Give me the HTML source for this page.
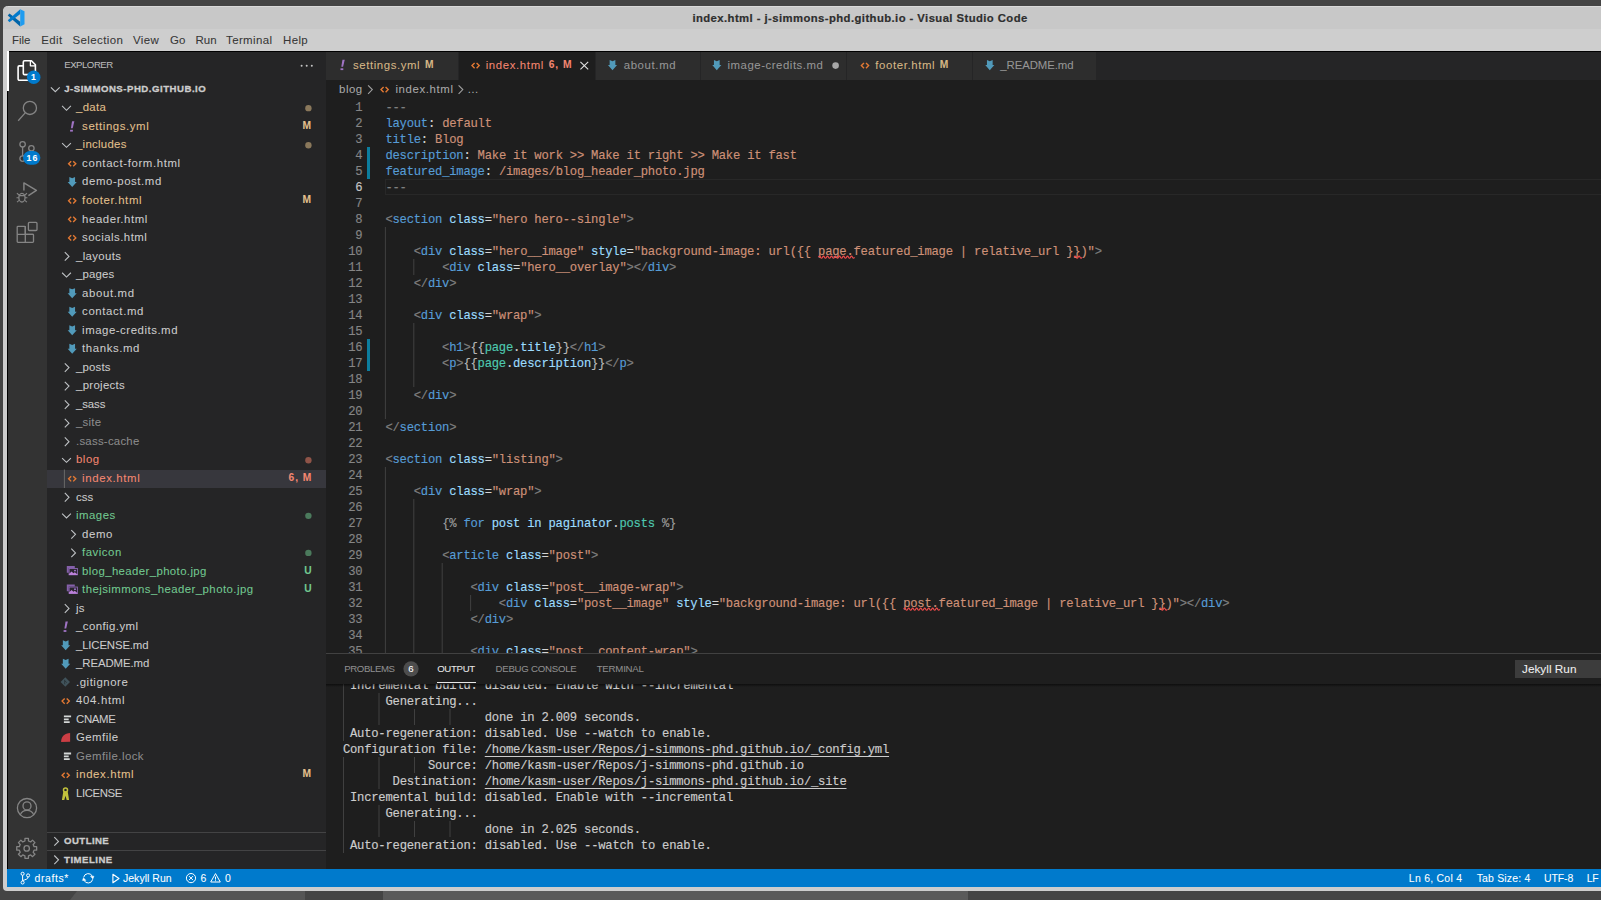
<!DOCTYPE html>
<html><head><meta charset="utf-8"><title>index.html - j-simmons-phd.github.io - Visual Studio Code</title>
<style>
html,body{margin:0;padding:0;}
body{width:1601px;height:900px;overflow:hidden;position:relative;background:#444;font-family:'Liberation Sans', sans-serif;}
body>div,body>span,body>svg{position:absolute;}
.t{white-space:pre;-webkit-text-stroke:0.06px;}
.m{font-family:'Liberation Mono', monospace;-webkit-text-stroke:0.15px;}
.t b{font-weight:400;}
</style></head>
<body>
<div style="left:3.00px;top:6.00px;width:1620.00px;height:885.00px;background:#cdcdcd;border-radius:5px 0 0 4px;"></div>
<div style="left:3.00px;top:6.00px;width:1620.00px;height:23.00px;background:#c8c8c8;border-radius:5px 0 0 0;"></div>
<div style="left:3.00px;top:29.00px;width:1620.00px;height:22.00px;background:#cecece;"></div>
<div style="left:8.00px;top:6.00px;width:1620.00px;height:1.00px;background:#d9d9d9;"></div>
<span class="t" id="t1" style="top:10.40px;line-height:16px;font-size:11.30px;color:#2e2e2e;left:692.40px;font-weight:700;letter-spacing:0.425px;-webkit-text-stroke:0.2px;">index.html - j-simmons-phd.github.io - Visual Studio Code</span>
<span class="t" id="t2" style="top:31.80px;line-height:16px;font-size:11.47px;color:#363636;left:12.00px;letter-spacing:-0.016px;">File</span>
<span class="t" id="t3" style="top:31.80px;line-height:16px;font-size:11.47px;color:#363636;left:41.30px;letter-spacing:0.387px;">Edit</span>
<span class="t" id="t4" style="top:31.80px;line-height:16px;font-size:11.47px;color:#363636;left:72.50px;letter-spacing:0.391px;">Selection</span>
<span class="t" id="t5" style="top:31.80px;line-height:16px;font-size:11.47px;color:#363636;left:133.00px;letter-spacing:0.363px;">View</span>
<span class="t" id="t6" style="top:31.80px;line-height:16px;font-size:11.47px;color:#363636;left:170.00px;letter-spacing:-0.023px;">Go</span>
<span class="t" id="t7" style="top:31.80px;line-height:16px;font-size:11.47px;color:#363636;left:195.50px;letter-spacing:0.016px;">Run</span>
<span class="t" id="t8" style="top:31.80px;line-height:16px;font-size:11.47px;color:#363636;left:226.00px;letter-spacing:0.395px;">Terminal</span>
<span class="t" id="t9" style="top:31.80px;line-height:16px;font-size:11.47px;color:#363636;left:283.00px;letter-spacing:0.371px;">Help</span>
<svg width="1601" height="900" viewBox="0 0 1601 900" style="left:0;top:0"><g transform="translate(7.4,9.3) scale(0.171)">
<polygon points="12,25 75,73 75,100 2,36" fill="#0065a9"/>
<polygon points="2,64 12,75 75,27 75,0" fill="#007acc"/>
<polygon points="75,0 100,12 100,88 75,100" fill="#1f9cf0"/>
</g></svg>
<div style="left:7.00px;top:51.00px;width:1600.00px;height:818.00px;background:#000;"></div>
<div style="left:8.00px;top:52.00px;width:39.00px;height:817.00px;background:#333333;"></div>
<div style="left:47.00px;top:52.00px;width:279.00px;height:817.00px;background:#252526;"></div>
<div style="left:326.00px;top:52.00px;width:1280.00px;height:817.00px;background:#1e1e1e;"></div>
<div style="left:326.00px;top:52.00px;width:1280.00px;height:28.00px;background:#252526;"></div>
<div style="left:7.00px;top:51.00px;width:2.20px;height:39.80px;background:#fff;"></div>
<svg width="1601" height="900" viewBox="0 0 1601 900" style="left:0;top:0">
<g fill="none" stroke="#fff" stroke-width="1.6" stroke-linejoin="round">
<path d="M23.3,73.4 V61.9 a1.2,1.2 0 0 1 1.2,-1.2 H31.4 L35.4,64.8 V73.4 a1.2,1.2 0 0 1 -1.2,1.2 H24.5 a1.2,1.2 0 0 1 -1.2,-1.2 Z"/>
<path d="M30.4,60.9 V65.8 H35.2" stroke-width="1.3"/>
<path d="M23.3,65.9 H19.3 a1.2,1.2 0 0 0 -1.2,1.2 V79.1 a1.2,1.2 0 0 0 1.2,1.2 H28.4 a1.2,1.2 0 0 0 1.2,-1.2 V74.6"/>
</g>
<circle cx="33.7" cy="77.3" r="6.8" fill="#007acc"/>
<g fill="none" stroke="#858585" stroke-width="1.3">
<circle cx="29.9" cy="107.9" r="6.6"/><path d="M25.2,112.9 L18.2,120.7"/>
<circle cx="22.6" cy="144.3" r="2.7"/><circle cx="31.4" cy="148.3" r="2.7"/><circle cx="22.6" cy="158.6" r="2.7"/>
<path d="M22.6,147 V155.9 M31.4,151 C31.4,155 27,155.5 22.6,155.9"/>
<path d="M23.9,190.6 V182.9 L36.4,190.3 L28.4,195.6" stroke-linejoin="round" stroke-width="1.45"/>
<ellipse cx="21.95" cy="197.7" rx="3.1" ry="4.3"/>
<path d="M19.1,195.6 H24.8 M18.9,195 L16.9,193.1 M25,195 L27,193.1 M18.8,197.7 H16.5 M25.1,197.7 H27.4 M19.1,200.4 L17,202.1 M24.8,200.4 L26.9,202.1" stroke-width="1.1"/>
<path d="M17.2,234.3 H33.5 M25.3,226.3 V242.3" />
<path d="M25.3,234.3 V227.1 a0.8,0.8 0 0 0 -0.8,-0.8 H18 a0.8,0.8 0 0 0 -0.8,0.8 V241.5 a0.8,0.8 0 0 0 0.8,0.8 H32.7 a0.8,0.8 0 0 0 0.8,-0.8 V235.1 a0.8,0.8 0 0 0 -0.8,-0.8 Z"/>
<rect x="28.4" y="222.4" width="8.6" height="8.1" rx="1"/>
<circle cx="27" cy="808.1" r="9.6"/><circle cx="27" cy="805.9" r="4"/>
<path d="M20.3,814.9 C21.5,811.6 24,810.4 27,810.4 C30,810.4 32.5,811.6 33.7,814.9"/>
<path d="M24.96,838.45 L28.44,838.45 L28.47,841.01 L30.67,841.92 L32.51,840.14 L34.96,842.59 L33.18,844.43 L34.09,846.63 L36.65,846.66 L36.65,850.14 L34.09,850.17 L33.18,852.37 L34.96,854.21 L32.51,856.66 L30.67,854.88 L28.47,855.79 L28.44,858.35 L24.96,858.35 L24.93,855.79 L22.73,854.88 L20.89,856.66 L18.44,854.21 L20.22,852.37 L19.31,850.17 L16.75,850.14 L16.75,846.66 L19.31,846.63 L20.22,844.43 L18.44,842.59 L20.89,840.14 L22.73,841.92 L24.93,841.01Z" stroke-linejoin="round"/><circle cx="26.7" cy="848.4" r="2.7"/>
</g>
<rect x="23" y="150.9" width="17.4" height="13.9" rx="6.95" fill="#007acc"/>
</svg>
<span class="t" id="t10" style="top:72.00px;line-height:10px;font-size:8.76px;color:#fff;left:31.00px;font-weight:700;letter-spacing:0.953px;">1</span>
<span class="t" id="t11" style="top:152.60px;line-height:10px;font-size:8.76px;color:#fff;left:26.60px;font-weight:700;letter-spacing:0.961px;">16</span>
<span class="t" id="t12" style="top:56.70px;line-height:16px;font-size:9.65px;color:#bbbbbb;left:64.20px;letter-spacing:-0.482px;">EXPLORER</span>
<svg width="1601" height="900" viewBox="0 0 1601 900" style="left:0;top:0"><g fill="#c5c5c5"><circle cx="301.6" cy="65.8" r="1"/><circle cx="306.7" cy="65.8" r="1"/><circle cx="311.8" cy="65.8" r="1"/></g></svg>
<span class="t" id="t13" style="top:80.60px;line-height:16px;font-size:9.65px;color:#cccccc;left:64.20px;font-weight:700;letter-spacing:0.505px;-webkit-text-stroke:0.3px;">J-SIMMONS-PHD.GITHUB.IO</span>
<span class="t" id="t14" style="top:99.36px;line-height:16px;font-size:11.40px;color:#e2c08d;left:76.00px;letter-spacing:0.309px;">_data</span>
<span class="t" id="t15" style="top:117.89px;line-height:16px;font-size:11.40px;color:#e2c08d;left:82.10px;letter-spacing:0.586px;">settings.yml</span>
<span class="t" id="t16" style="top:117.89px;line-height:16px;font-size:10.26px;color:#e2c08d;right:1288.70px;font-weight:700;letter-spacing:1.234px;">M</span>
<span class="t" id="t17" style="top:136.43px;line-height:16px;font-size:11.40px;color:#e2c08d;left:76.00px;letter-spacing:0.288px;">_includes</span>
<span class="t" id="t18" style="top:154.95px;line-height:16px;font-size:11.40px;color:#cccccc;left:82.10px;letter-spacing:0.627px;">contact-form.html</span>
<span class="t" id="t19" style="top:173.49px;line-height:16px;font-size:11.40px;color:#cccccc;left:82.10px;letter-spacing:0.578px;">demo-post.md</span>
<span class="t" id="t20" style="top:192.01px;line-height:16px;font-size:11.40px;color:#e2c08d;left:82.10px;letter-spacing:0.625px;">footer.html</span>
<span class="t" id="t21" style="top:192.01px;line-height:16px;font-size:10.26px;color:#e2c08d;right:1288.70px;font-weight:700;letter-spacing:1.234px;">M</span>
<span class="t" id="t22" style="top:210.55px;line-height:16px;font-size:11.40px;color:#cccccc;left:82.10px;letter-spacing:0.572px;">header.html</span>
<span class="t" id="t23" style="top:229.07px;line-height:16px;font-size:11.40px;color:#cccccc;left:82.10px;letter-spacing:0.473px;">socials.html</span>
<span class="t" id="t24" style="top:247.61px;line-height:16px;font-size:11.40px;color:#cccccc;left:76.00px;letter-spacing:0.350px;">_layouts</span>
<span class="t" id="t25" style="top:266.14px;line-height:16px;font-size:11.40px;color:#cccccc;left:76.00px;letter-spacing:0.177px;">_pages</span>
<span class="t" id="t26" style="top:284.67px;line-height:16px;font-size:11.40px;color:#cccccc;left:82.10px;letter-spacing:0.633px;">about.md</span>
<span class="t" id="t27" style="top:303.20px;line-height:16px;font-size:11.40px;color:#cccccc;left:82.10px;letter-spacing:0.620px;">contact.md</span>
<span class="t" id="t28" style="top:321.73px;line-height:16px;font-size:11.40px;color:#cccccc;left:82.10px;letter-spacing:0.535px;">image-credits.md</span>
<span class="t" id="t29" style="top:340.26px;line-height:16px;font-size:11.40px;color:#cccccc;left:82.10px;letter-spacing:0.592px;">thanks.md</span>
<span class="t" id="t30" style="top:358.79px;line-height:16px;font-size:11.40px;color:#cccccc;left:76.00px;letter-spacing:0.198px;">_posts</span>
<span class="t" id="t31" style="top:377.32px;line-height:16px;font-size:11.40px;color:#cccccc;left:76.00px;letter-spacing:0.314px;">_projects</span>
<span class="t" id="t32" style="top:395.85px;line-height:16px;font-size:11.40px;color:#cccccc;left:76.00px;letter-spacing:-0.106px;">_sass</span>
<span class="t" id="t33" style="top:414.38px;line-height:16px;font-size:11.40px;color:#8c8c8c;left:76.00px;letter-spacing:0.228px;">_site</span>
<span class="t" id="t34" style="top:432.91px;line-height:16px;font-size:11.40px;color:#8c8c8c;left:76.00px;letter-spacing:0.250px;">.sass-cache</span>
<span class="t" id="t35" style="top:451.44px;line-height:16px;font-size:11.40px;color:#f48771;left:76.00px;letter-spacing:0.512px;">blog</span>
<div style="left:47.00px;top:469.50px;width:279.00px;height:18.53px;background:#37373d;"></div>
<span class="t" id="t36" style="top:469.97px;line-height:16px;font-size:11.40px;color:#f48771;left:82.10px;letter-spacing:0.631px;">index.html</span>
<span class="t" id="t37" style="top:469.97px;line-height:16px;font-size:10.26px;color:#f48771;right:1288.70px;font-weight:700;letter-spacing:0.961px;">6, M</span>
<span class="t" id="t38" style="top:488.50px;line-height:16px;font-size:11.40px;color:#cccccc;left:76.00px;letter-spacing:0.099px;">css</span>
<span class="t" id="t39" style="top:507.03px;line-height:16px;font-size:11.40px;color:#73c991;left:76.00px;letter-spacing:0.497px;">images</span>
<span class="t" id="t40" style="top:525.56px;line-height:16px;font-size:11.40px;color:#cccccc;left:82.10px;letter-spacing:0.621px;">demo</span>
<span class="t" id="t41" style="top:544.09px;line-height:16px;font-size:11.40px;color:#73c991;left:82.10px;letter-spacing:0.509px;">favicon</span>
<span class="t" id="t42" style="top:562.62px;line-height:16px;font-size:11.40px;color:#73c991;left:82.10px;letter-spacing:0.387px;">blog_header_photo.jpg</span>
<span class="t" id="t43" style="top:562.62px;line-height:16px;font-size:10.26px;color:#73c991;right:1288.70px;font-weight:700;letter-spacing:0.578px;">U</span>
<span class="t" id="t44" style="top:581.15px;line-height:16px;font-size:11.40px;color:#73c991;left:82.10px;letter-spacing:0.443px;">thejsimmons_header_photo.jpg</span>
<span class="t" id="t45" style="top:581.15px;line-height:16px;font-size:10.26px;color:#73c991;right:1288.70px;font-weight:700;letter-spacing:0.578px;">U</span>
<span class="t" id="t46" style="top:599.68px;line-height:16px;font-size:11.40px;color:#cccccc;left:76.00px;letter-spacing:0.250px;">js</span>
<span class="t" id="t47" style="top:618.21px;line-height:16px;font-size:11.40px;color:#cccccc;left:76.00px;letter-spacing:0.443px;">_config.yml</span>
<span class="t" id="t48" style="top:636.74px;line-height:16px;font-size:11.40px;color:#cccccc;left:76.00px;letter-spacing:-0.158px;">_LICENSE.md</span>
<span class="t" id="t49" style="top:655.27px;line-height:16px;font-size:11.40px;color:#cccccc;left:76.00px;letter-spacing:-0.086px;">_README.md</span>
<span class="t" id="t50" style="top:673.80px;line-height:16px;font-size:11.40px;color:#cccccc;left:76.00px;letter-spacing:0.541px;">.gitignore</span>
<span class="t" id="t51" style="top:692.33px;line-height:16px;font-size:11.40px;color:#cccccc;left:76.00px;letter-spacing:0.688px;">404.html</span>
<span class="t" id="t52" style="top:710.86px;line-height:16px;font-size:11.40px;color:#cccccc;left:76.00px;letter-spacing:-0.309px;">CNAME</span>
<span class="t" id="t53" style="top:729.38px;line-height:16px;font-size:11.40px;color:#cccccc;left:76.00px;letter-spacing:0.460px;">Gemfile</span>
<span class="t" id="t54" style="top:747.92px;line-height:16px;font-size:11.40px;color:#8c8c8c;left:76.00px;letter-spacing:0.443px;">Gemfile.lock</span>
<span class="t" id="t55" style="top:766.45px;line-height:16px;font-size:11.40px;color:#e2c08d;left:76.00px;letter-spacing:0.631px;">index.html</span>
<span class="t" id="t56" style="top:766.45px;line-height:16px;font-size:10.26px;color:#e2c08d;right:1288.70px;font-weight:700;letter-spacing:1.234px;">M</span>
<span class="t" id="t57" style="top:784.98px;line-height:16px;font-size:11.40px;color:#cccccc;left:76.00px;letter-spacing:-0.415px;">LICENSE</span>
<div style="left:47.00px;top:832.00px;width:279.00px;height:1.00px;background:#434344;"></div>
<div style="left:47.00px;top:850.40px;width:279.00px;height:1.00px;background:#434344;"></div>
<span class="t" id="t58" style="top:832.80px;line-height:16px;font-size:9.65px;color:#cccccc;left:64.10px;font-weight:700;letter-spacing:0.406px;-webkit-text-stroke:0.3px;">OUTLINE</span>
<span class="t" id="t59" style="top:851.70px;line-height:16px;font-size:9.65px;color:#cccccc;left:64.10px;font-weight:700;letter-spacing:0.469px;-webkit-text-stroke:0.3px;">TIMELINE</span>
<svg width="1601" height="900" viewBox="0 0 1601 900" style="left:0;top:0"><path d="M50.90,87.40 L55.30,91.70 L59.70,87.40" fill="none" stroke="#bfc2c5" stroke-width="1.1"/><path d="M62.10,105.97 L66.50,110.27 L70.90,105.97" fill="none" stroke="#bfc2c5" stroke-width="1.1"/><circle cx="308.4" cy="108.17" r="3.2" fill="#8a785b"/><polygon points="72.05,121.20 74.35,121.20 72.70,128.19 70.90,128.19" fill="#a074c4"/><rect x="70.10" y="129.80" width="2.8" height="1.8" fill="#a074c4"/><path d="M62.10,143.03 L66.50,147.33 L70.90,143.03" fill="none" stroke="#bfc2c5" stroke-width="1.1"/><circle cx="308.4" cy="145.23" r="3.2" fill="#8a785b"/><path d="M71.20,161.16 L68.60,163.75 L71.20,166.35 M73.20,161.16 L75.80,163.75 L73.20,166.35" fill="none" stroke="#e37933" stroke-width="1.4"/><polygon points="69.35,176.99 72.20,178.19 75.05,176.99 75.05,181.99 76.75,181.99 72.20,187.09 67.65,181.99 69.35,181.99" fill="#519aba"/><path d="M71.20,198.22 L68.60,200.81 L71.20,203.41 M73.20,198.22 L75.80,200.81 L73.20,203.41" fill="none" stroke="#e37933" stroke-width="1.4"/><path d="M71.20,216.75 L68.60,219.35 L71.20,221.95 M73.20,216.75 L75.80,219.35 L73.20,221.95" fill="none" stroke="#e37933" stroke-width="1.4"/><path d="M71.20,235.28 L68.60,237.88 L71.20,240.47 M73.20,235.28 L75.80,237.88 L73.20,240.47" fill="none" stroke="#e37933" stroke-width="1.4"/><path d="M64.80,252.11 L69.00,256.41 L64.80,260.71" fill="none" stroke="#bfc2c5" stroke-width="1.1"/><path d="M62.10,272.74 L66.50,277.04 L70.90,272.74" fill="none" stroke="#bfc2c5" stroke-width="1.1"/><polygon points="69.35,288.17 72.20,289.37 75.05,288.17 75.05,293.17 76.75,293.17 72.20,298.27 67.65,293.17 69.35,293.17" fill="#519aba"/><polygon points="69.35,306.69 72.20,307.89 75.05,306.69 75.05,311.69 76.75,311.69 72.20,316.80 67.65,311.69 69.35,311.69" fill="#519aba"/><polygon points="69.35,325.22 72.20,326.42 75.05,325.22 75.05,330.22 76.75,330.22 72.20,335.32 67.65,330.22 69.35,330.22" fill="#519aba"/><polygon points="69.35,343.75 72.20,344.95 75.05,343.75 75.05,348.75 76.75,348.75 72.20,353.86 67.65,348.75 69.35,348.75" fill="#519aba"/><path d="M64.80,363.29 L69.00,367.59 L64.80,371.89" fill="none" stroke="#bfc2c5" stroke-width="1.1"/><path d="M64.80,381.81 L69.00,386.12 L64.80,390.42" fill="none" stroke="#bfc2c5" stroke-width="1.1"/><path d="M64.80,400.34 L69.00,404.64 L64.80,408.94" fill="none" stroke="#bfc2c5" stroke-width="1.1"/><path d="M64.80,418.87 L69.00,423.17 L64.80,427.47" fill="none" stroke="#bfc2c5" stroke-width="1.1"/><path d="M64.80,437.41 L69.00,441.71 L64.80,446.01" fill="none" stroke="#bfc2c5" stroke-width="1.1"/><path d="M62.10,458.04 L66.50,462.34 L70.90,458.04" fill="none" stroke="#bfc2c5" stroke-width="1.1"/><circle cx="308.4" cy="460.24" r="3.2" fill="#8f5448"/><path d="M71.20,476.16 L68.60,478.76 L71.20,481.37 M73.20,476.16 L75.80,478.76 L73.20,481.37" fill="none" stroke="#e37933" stroke-width="1.4"/><path d="M64.80,492.99 L69.00,497.29 L64.80,501.59" fill="none" stroke="#bfc2c5" stroke-width="1.1"/><path d="M62.10,513.62 L66.50,517.92 L70.90,513.62" fill="none" stroke="#bfc2c5" stroke-width="1.1"/><circle cx="308.4" cy="515.83" r="3.2" fill="#4b7a5c"/><path d="M71.30,530.06 L75.50,534.36 L71.30,538.65" fill="none" stroke="#bfc2c5" stroke-width="1.1"/><path d="M71.30,548.59 L75.50,552.88 L71.30,557.18" fill="none" stroke="#bfc2c5" stroke-width="1.1"/><circle cx="308.4" cy="552.88" r="3.2" fill="#4b7a5c"/><path d="M67.75,572.71 V566.96 H74.80" fill="none" stroke="#8560aa" stroke-width="1.9"/><rect x="69.10" y="568.51" width="8.3" height="6.3" fill="#2a252e" stroke="#8c66b4" stroke-width="0.9"/><polygon points="68.90,575.12 68.90,574.01 71.60,571.51 73.40,573.31 74.80,572.31 77.60,574.62 77.60,575.12" fill="#bb80d8"/><circle cx="75.00" cy="570.62" r="0.95" fill="#a47ad0"/><path d="M67.75,591.25 V585.50 H74.80" fill="none" stroke="#8560aa" stroke-width="1.9"/><rect x="69.10" y="587.05" width="8.3" height="6.3" fill="#2a252e" stroke="#8c66b4" stroke-width="0.9"/><polygon points="68.90,593.65 68.90,592.55 71.60,590.05 73.40,591.85 74.80,590.85 77.60,593.15 77.60,593.65" fill="#bb80d8"/><circle cx="75.00" cy="589.15" r="0.95" fill="#a47ad0"/><path d="M64.80,604.18 L69.00,608.48 L64.80,612.77" fill="none" stroke="#bfc2c5" stroke-width="1.1"/><polygon points="65.55,621.50 67.85,621.50 66.20,628.50 64.40,628.50" fill="#a074c4"/><rect x="63.60" y="630.11" width="2.8" height="1.8" fill="#a074c4"/><polygon points="62.85,640.24 65.70,641.43 68.55,640.24 68.55,645.24 70.25,645.24 65.70,650.33 61.15,645.24 62.85,645.24" fill="#519aba"/><polygon points="62.85,658.77 65.70,659.97 68.55,658.77 68.55,663.77 70.25,663.77 65.70,668.87 61.15,663.77 62.85,663.77" fill="#519aba"/><polygon points="65.30,677.29 70.00,682.00 65.30,686.70 60.60,682.00" fill="#41535b"/><path d="M64.70,679.79 V684.20 M64.70,680.79 L66.80,682.60" stroke="#2a3439" stroke-width="0.9" fill="none"/><path d="M64.70,698.52 L62.10,701.12 L64.70,703.73 M66.70,698.52 L69.30,701.12 L66.70,703.73" fill="none" stroke="#e37933" stroke-width="1.4"/><path d="M63.90,716.46 H71.10 M63.90,719.36 H68.70 M63.90,722.06 H69.70" stroke="#d4d7d6" stroke-width="1.8" fill="none"/><path d="M61.10,742.08 C61.10,736.68 64.70,733.08 70.10,733.08 V741.68 Z" fill="#cc3e44"/><path d="M63.90,753.52 H71.10 M63.90,756.42 H68.70 M63.90,759.12 H69.70" stroke="#d4d7d6" stroke-width="1.8" fill="none"/><path d="M64.70,772.64 L62.10,775.25 L64.70,777.85 M66.70,772.64 L69.30,775.25 L66.70,777.85" fill="none" stroke="#e37933" stroke-width="1.4"/><circle cx="65.50" cy="790.07" r="2.0" fill="none" stroke="#c2c23c" stroke-width="1.5"/><polygon points="63.30,791.57 67.70,791.57 69.10,799.98 66.70,799.98 65.50,795.77 64.30,799.98 61.90,799.98" fill="#c2c23c"/><path d="M64.4,469.50 V488.03" stroke="#686868" stroke-width="1"/><path d="M54.30,837.10 L58.50,841.40 L54.30,845.70" fill="none" stroke="#bfc2c5" stroke-width="1.1"/><path d="M54.30,855.50 L58.50,859.80 L54.30,864.10" fill="none" stroke="#bfc2c5" stroke-width="1.1"/></svg>
<div style="left:326.00px;top:52.00px;width:131.50px;height:28.00px;background:#2d2d2d;"></div>
<div style="left:458.50px;top:52.00px;width:136.50px;height:28.00px;background:#1e1e1e;"></div>
<div style="left:596.00px;top:52.00px;width:103.50px;height:28.00px;background:#2d2d2d;"></div>
<div style="left:700.50px;top:52.00px;width:145.90px;height:28.00px;background:#2d2d2d;"></div>
<div style="left:847.40px;top:52.00px;width:124.90px;height:28.00px;background:#2d2d2d;"></div>
<div style="left:973.30px;top:52.00px;width:122.80px;height:28.00px;background:#2d2d2d;"></div>
<span class="t" id="t60" style="top:57.00px;line-height:16px;font-size:11.40px;color:#d6b786;left:353.00px;letter-spacing:0.586px;">settings.yml</span>
<span class="t" id="t61" style="top:57.00px;line-height:16px;font-size:10.26px;color:#d6b786;left:425.00px;font-weight:700;letter-spacing:1.234px;">M</span>
<span class="t" id="t62" style="top:57.00px;line-height:16px;font-size:11.40px;color:#f48771;left:485.70px;letter-spacing:0.631px;">index.html</span>
<span class="t" id="t63" style="top:57.00px;line-height:16px;font-size:10.26px;color:#f48771;left:548.70px;font-weight:700;letter-spacing:0.961px;">6, M</span>
<span class="t" id="t64" style="top:57.00px;line-height:16px;font-size:11.40px;color:#969696;left:623.70px;letter-spacing:0.633px;">about.md</span>
<span class="t" id="t65" style="top:57.00px;line-height:16px;font-size:11.40px;color:#969696;left:727.50px;letter-spacing:0.535px;">image-credits.md</span>
<span class="t" id="t66" style="top:57.00px;line-height:16px;font-size:11.40px;color:#d6b786;left:875.20px;letter-spacing:0.625px;">footer.html</span>
<span class="t" id="t67" style="top:57.00px;line-height:16px;font-size:10.26px;color:#d6b786;left:939.70px;font-weight:700;letter-spacing:1.234px;">M</span>
<span class="t" id="t68" style="top:57.00px;line-height:16px;font-size:11.40px;color:#969696;left:1000.30px;letter-spacing:-0.086px;">_README.md</span>
<span class="t" id="t69" style="top:80.80px;line-height:16px;font-size:11.40px;color:#a9a9a9;left:339.10px;letter-spacing:0.512px;">blog</span>
<span class="t" id="t70" style="top:80.80px;line-height:16px;font-size:11.40px;color:#a9a9a9;left:395.40px;letter-spacing:0.631px;">index.html</span>
<span class="t" id="t71" style="top:80.60px;line-height:16px;font-size:11.40px;color:#a9a9a9;left:467.30px;letter-spacing:-0.469px;">…</span>
<svg width="1601" height="900" viewBox="0 0 1601 900" style="left:0;top:0"><polygon points="342.45,59.70 344.75,59.70 343.10,66.70 341.30,66.70" fill="#a074c4"/><rect x="340.50" y="68.30" width="2.8" height="1.8" fill="#a074c4"/><path d="M474.60,63.00 L472.00,65.60 L474.60,68.20 M476.60,63.00 L479.20,65.60 L476.60,68.20" fill="none" stroke="#e37933" stroke-width="1.4"/><path d="M580.4,61.9 L588.2,69.3 M588.2,61.9 L580.4,69.3" stroke="#e0e0e0" stroke-width="1.15" fill="none"/><polygon points="609.65,60.10 612.50,61.30 615.35,60.10 615.35,65.10 617.05,65.10 612.50,70.20 607.95,65.10 609.65,65.10" fill="#519aba"/><polygon points="713.95,60.10 716.80,61.30 719.65,60.10 719.65,65.10 721.35,65.10 716.80,70.20 712.25,65.10 713.95,65.10" fill="#519aba"/><circle cx="835.6" cy="65.6" r="3.3" fill="#a8a8a8"/><path d="M864.00,63.00 L861.40,65.60 L864.00,68.20 M866.00,63.00 L868.60,65.60 L866.00,68.20" fill="none" stroke="#e37933" stroke-width="1.4"/><polygon points="986.95,60.10 989.80,61.30 992.65,60.10 992.65,65.10 994.35,65.10 989.80,70.20 985.25,65.10 986.95,65.10" fill="#519aba"/><path d="M368.10,85.30 L372.30,89.60 L368.10,93.90" fill="none" stroke="#a0a0a0" stroke-width="1.1"/><path d="M383.60,87.00 L381.00,89.60 L383.60,92.20 M385.60,87.00 L388.20,89.60 L385.60,92.20" fill="none" stroke="#e37933" stroke-width="1.4"/><path d="M458.60,85.30 L462.80,89.60 L458.60,93.90" fill="none" stroke="#a0a0a0" stroke-width="1.1"/></svg>
<div style="left:385.00px;top:179.00px;width:1230.00px;height:16.00px;background:transparent;box-sizing:border-box;border:1px solid #282828;"></div>
<div style="left:367.00px;top:147.00px;width:3.00px;height:32.00px;background:#0c7d9d;"></div>
<div style="left:367.00px;top:339.00px;width:3.00px;height:32.00px;background:#0c7d9d;"></div>
<span class="t m" id="t72" style="top:100.00px;line-height:16px;font-size:12.20px;color:#858585;right:1238.60px;letter-spacing:-0.234px;">1</span>
<span class="t m" id="t73" style="left:385.40px;top:100.00px;line-height:16px;font-size:12.20px;color:#d4d4d4;letter-spacing:-0.224px;"><b style="color:#808080">---</b></span>
<span class="t m" id="t74" style="top:116.00px;line-height:16px;font-size:12.20px;color:#858585;right:1238.60px;letter-spacing:-0.234px;">2</span>
<span class="t m" id="t75" style="left:385.40px;top:116.00px;line-height:16px;font-size:12.20px;color:#d4d4d4;letter-spacing:-0.222px;"><b style="color:#569cd6">layout</b>: <b style="color:#ce9178">default</b></span>
<span class="t m" id="t76" style="top:132.00px;line-height:16px;font-size:12.20px;color:#858585;right:1238.60px;letter-spacing:-0.234px;">3</span>
<span class="t m" id="t77" style="left:385.40px;top:132.00px;line-height:16px;font-size:12.20px;color:#d4d4d4;letter-spacing:-0.223px;"><b style="color:#569cd6">title</b>: <b style="color:#ce9178">Blog</b></span>
<span class="t m" id="t78" style="top:148.00px;line-height:16px;font-size:12.20px;color:#858585;right:1238.60px;letter-spacing:-0.234px;">4</span>
<span class="t m" id="t79" style="left:385.40px;top:148.00px;line-height:16px;font-size:12.20px;color:#d4d4d4;letter-spacing:-0.221px;"><b style="color:#569cd6">description</b>: <b style="color:#ce9178">Make it work &gt;&gt; Make it right &gt;&gt; Make it fast</b></span>
<span class="t m" id="t80" style="top:164.00px;line-height:16px;font-size:12.20px;color:#858585;right:1238.60px;letter-spacing:-0.234px;">5</span>
<span class="t m" id="t81" style="left:385.40px;top:164.00px;line-height:16px;font-size:12.20px;color:#d4d4d4;letter-spacing:-0.221px;"><b style="color:#569cd6">featured_image</b>: <b style="color:#ce9178">/images/blog_header_photo.jpg</b></span>
<span class="t m" id="t82" style="top:180.00px;line-height:16px;font-size:12.20px;color:#c6c6c6;right:1238.60px;letter-spacing:-0.234px;">6</span>
<span class="t m" id="t83" style="left:385.40px;top:180.00px;line-height:16px;font-size:12.20px;color:#d4d4d4;letter-spacing:-0.224px;"><b style="color:#808080">---</b></span>
<span class="t m" id="t84" style="top:196.00px;line-height:16px;font-size:12.20px;color:#858585;right:1238.60px;letter-spacing:-0.234px;">7</span>
<span class="t m" id="t85" style="top:212.00px;line-height:16px;font-size:12.20px;color:#858585;right:1238.60px;letter-spacing:-0.234px;">8</span>
<span class="t m" id="t86" style="left:385.40px;top:212.00px;line-height:16px;font-size:12.20px;color:#d4d4d4;letter-spacing:-0.223px;"><b style="color:#808080">&lt;</b><b style="color:#569cd6">section</b> <b style="color:#9cdcfe">class</b>=<b style="color:#ce9178">"hero hero--single"</b><b style="color:#808080">&gt;</b></span>
<span class="t m" id="t87" style="top:228.00px;line-height:16px;font-size:12.20px;color:#858585;right:1238.60px;letter-spacing:-0.234px;">9</span>
<span class="t m" id="t88" style="top:244.00px;line-height:16px;font-size:12.20px;color:#858585;right:1238.60px;letter-spacing:-0.227px;">10</span>
<span class="t m" id="t89" style="left:385.40px;top:244.00px;line-height:16px;font-size:12.20px;color:#d4d4d4;letter-spacing:-0.222px;">    <b style="color:#808080">&lt;</b><b style="color:#569cd6">div</b> <b style="color:#9cdcfe">class</b>=<b style="color:#ce9178">"hero__image"</b> <b style="color:#9cdcfe">style</b>=<b style="color:#ce9178">"background-image: url({{ page.featured_image | relative_url }})"</b><b style="color:#808080">&gt;</b></span>
<span class="t m" id="t90" style="top:260.00px;line-height:16px;font-size:12.20px;color:#858585;right:1238.60px;letter-spacing:-0.227px;">11</span>
<span class="t m" id="t91" style="left:385.40px;top:260.00px;line-height:16px;font-size:12.20px;color:#d4d4d4;letter-spacing:-0.223px;">        <b style="color:#808080">&lt;</b><b style="color:#569cd6">div</b> <b style="color:#9cdcfe">class</b>=<b style="color:#ce9178">"hero__overlay"</b><b style="color:#808080">&gt;</b><b style="color:#808080">&lt;/</b><b style="color:#569cd6">div</b><b style="color:#808080">&gt;</b></span>
<span class="t m" id="t92" style="top:276.00px;line-height:16px;font-size:12.20px;color:#858585;right:1238.60px;letter-spacing:-0.227px;">12</span>
<span class="t m" id="t93" style="left:385.40px;top:276.00px;line-height:16px;font-size:12.20px;color:#d4d4d4;letter-spacing:-0.225px;">    <b style="color:#808080">&lt;/</b><b style="color:#569cd6">div</b><b style="color:#808080">&gt;</b></span>
<span class="t m" id="t94" style="top:292.00px;line-height:16px;font-size:12.20px;color:#858585;right:1238.60px;letter-spacing:-0.227px;">13</span>
<span class="t m" id="t95" style="top:308.00px;line-height:16px;font-size:12.20px;color:#858585;right:1238.60px;letter-spacing:-0.227px;">14</span>
<span class="t m" id="t96" style="left:385.40px;top:308.00px;line-height:16px;font-size:12.20px;color:#d4d4d4;letter-spacing:-0.224px;">    <b style="color:#808080">&lt;</b><b style="color:#569cd6">div</b> <b style="color:#9cdcfe">class</b>=<b style="color:#ce9178">"wrap"</b><b style="color:#808080">&gt;</b></span>
<span class="t m" id="t97" style="top:324.00px;line-height:16px;font-size:12.20px;color:#858585;right:1238.60px;letter-spacing:-0.227px;">15</span>
<span class="t m" id="t98" style="top:340.00px;line-height:16px;font-size:12.20px;color:#858585;right:1238.60px;letter-spacing:-0.227px;">16</span>
<span class="t m" id="t99" style="left:385.40px;top:340.00px;line-height:16px;font-size:12.20px;color:#d4d4d4;letter-spacing:-0.225px;">        <b style="color:#808080">&lt;</b><b style="color:#569cd6">h1</b><b style="color:#808080">&gt;</b><b style="color:#b8b8b8">{{</b><b style="color:#4ec9b0">page</b>.<b style="color:#9cdcfe">title</b><b style="color:#b8b8b8">}}</b><b style="color:#808080">&lt;/</b><b style="color:#569cd6">h1</b><b style="color:#808080">&gt;</b></span>
<span class="t m" id="t100" style="top:356.00px;line-height:16px;font-size:12.20px;color:#858585;right:1238.60px;letter-spacing:-0.227px;">17</span>
<span class="t m" id="t101" style="left:385.40px;top:356.00px;line-height:16px;font-size:12.20px;color:#d4d4d4;letter-spacing:-0.224px;">        <b style="color:#808080">&lt;</b><b style="color:#569cd6">p</b><b style="color:#808080">&gt;</b><b style="color:#b8b8b8">{{</b><b style="color:#4ec9b0">page</b>.<b style="color:#9cdcfe">description</b><b style="color:#b8b8b8">}}</b><b style="color:#808080">&lt;/</b><b style="color:#569cd6">p</b><b style="color:#808080">&gt;</b></span>
<span class="t m" id="t102" style="top:372.00px;line-height:16px;font-size:12.20px;color:#858585;right:1238.60px;letter-spacing:-0.227px;">18</span>
<span class="t m" id="t103" style="top:388.00px;line-height:16px;font-size:12.20px;color:#858585;right:1238.60px;letter-spacing:-0.227px;">19</span>
<span class="t m" id="t104" style="left:385.40px;top:388.00px;line-height:16px;font-size:12.20px;color:#d4d4d4;letter-spacing:-0.225px;">    <b style="color:#808080">&lt;/</b><b style="color:#569cd6">div</b><b style="color:#808080">&gt;</b></span>
<span class="t m" id="t105" style="top:404.00px;line-height:16px;font-size:12.20px;color:#858585;right:1238.60px;letter-spacing:-0.227px;">20</span>
<span class="t m" id="t106" style="top:420.00px;line-height:16px;font-size:12.20px;color:#858585;right:1238.60px;letter-spacing:-0.227px;">21</span>
<span class="t m" id="t107" style="left:385.40px;top:420.00px;line-height:16px;font-size:12.20px;color:#d4d4d4;letter-spacing:-0.223px;"><b style="color:#808080">&lt;/</b><b style="color:#569cd6">section</b><b style="color:#808080">&gt;</b></span>
<span class="t m" id="t108" style="top:436.00px;line-height:16px;font-size:12.20px;color:#858585;right:1238.60px;letter-spacing:-0.227px;">22</span>
<span class="t m" id="t109" style="top:452.00px;line-height:16px;font-size:12.20px;color:#858585;right:1238.60px;letter-spacing:-0.227px;">23</span>
<span class="t m" id="t110" style="left:385.40px;top:452.00px;line-height:16px;font-size:12.20px;color:#d4d4d4;letter-spacing:-0.223px;"><b style="color:#808080">&lt;</b><b style="color:#569cd6">section</b> <b style="color:#9cdcfe">class</b>=<b style="color:#ce9178">"listing"</b><b style="color:#808080">&gt;</b></span>
<span class="t m" id="t111" style="top:468.00px;line-height:16px;font-size:12.20px;color:#858585;right:1238.60px;letter-spacing:-0.227px;">24</span>
<span class="t m" id="t112" style="top:484.00px;line-height:16px;font-size:12.20px;color:#858585;right:1238.60px;letter-spacing:-0.227px;">25</span>
<span class="t m" id="t113" style="left:385.40px;top:484.00px;line-height:16px;font-size:12.20px;color:#d4d4d4;letter-spacing:-0.224px;">    <b style="color:#808080">&lt;</b><b style="color:#569cd6">div</b> <b style="color:#9cdcfe">class</b>=<b style="color:#ce9178">"wrap"</b><b style="color:#808080">&gt;</b></span>
<span class="t m" id="t114" style="top:500.00px;line-height:16px;font-size:12.20px;color:#858585;right:1238.60px;letter-spacing:-0.227px;">26</span>
<span class="t m" id="t115" style="top:516.00px;line-height:16px;font-size:12.20px;color:#858585;right:1238.60px;letter-spacing:-0.227px;">27</span>
<span class="t m" id="t116" style="left:385.40px;top:516.00px;line-height:16px;font-size:12.20px;color:#d4d4d4;letter-spacing:-0.223px;">        <b style="color:#9d9d9d">{%</b> <b style="color:#569cd6">for</b> <b style="color:#9cdcfe">post in paginator</b>.<b style="color:#4ec9b0">posts</b> <b style="color:#9d9d9d">%}</b></span>
<span class="t m" id="t117" style="top:532.00px;line-height:16px;font-size:12.20px;color:#858585;right:1238.60px;letter-spacing:-0.227px;">28</span>
<span class="t m" id="t118" style="top:548.00px;line-height:16px;font-size:12.20px;color:#858585;right:1238.60px;letter-spacing:-0.227px;">29</span>
<span class="t m" id="t119" style="left:385.40px;top:548.00px;line-height:16px;font-size:12.20px;color:#d4d4d4;letter-spacing:-0.223px;">        <b style="color:#808080">&lt;</b><b style="color:#569cd6">article</b> <b style="color:#9cdcfe">class</b>=<b style="color:#ce9178">"post"</b><b style="color:#808080">&gt;</b></span>
<span class="t m" id="t120" style="top:564.00px;line-height:16px;font-size:12.20px;color:#858585;right:1238.60px;letter-spacing:-0.227px;">30</span>
<span class="t m" id="t121" style="top:580.00px;line-height:16px;font-size:12.20px;color:#858585;right:1238.60px;letter-spacing:-0.227px;">31</span>
<span class="t m" id="t122" style="left:385.40px;top:580.00px;line-height:16px;font-size:12.20px;color:#d4d4d4;letter-spacing:-0.222px;">            <b style="color:#808080">&lt;</b><b style="color:#569cd6">div</b> <b style="color:#9cdcfe">class</b>=<b style="color:#ce9178">"post__image-wrap"</b><b style="color:#808080">&gt;</b></span>
<span class="t m" id="t123" style="top:596.00px;line-height:16px;font-size:12.20px;color:#858585;right:1238.60px;letter-spacing:-0.227px;">32</span>
<span class="t m" id="t124" style="left:385.40px;top:596.00px;line-height:16px;font-size:12.20px;color:#d4d4d4;letter-spacing:-0.222px;">                <b style="color:#808080">&lt;</b><b style="color:#569cd6">div</b> <b style="color:#9cdcfe">class</b>=<b style="color:#ce9178">"post__image"</b> <b style="color:#9cdcfe">style</b>=<b style="color:#ce9178">"background-image: url({{ post.featured_image | relative_url }})"</b><b style="color:#808080">&gt;</b><b style="color:#808080">&lt;/</b><b style="color:#569cd6">div</b><b style="color:#808080">&gt;</b></span>
<span class="t m" id="t125" style="top:612.00px;line-height:16px;font-size:12.20px;color:#858585;right:1238.60px;letter-spacing:-0.227px;">33</span>
<span class="t m" id="t126" style="left:385.40px;top:612.00px;line-height:16px;font-size:12.20px;color:#d4d4d4;letter-spacing:-0.222px;">            <b style="color:#808080">&lt;/</b><b style="color:#569cd6">div</b><b style="color:#808080">&gt;</b></span>
<span class="t m" id="t127" style="top:628.00px;line-height:16px;font-size:12.20px;color:#858585;right:1238.60px;letter-spacing:-0.227px;">34</span>
<span class="t m" id="t128" style="top:644.00px;line-height:16px;font-size:12.20px;color:#858585;right:1238.60px;letter-spacing:-0.227px;">35</span>
<span class="t m" id="t129" style="left:385.40px;top:644.00px;line-height:16px;font-size:12.20px;color:#d4d4d4;letter-spacing:-0.222px;">            <b style="color:#808080">&lt;</b><b style="color:#569cd6">div</b> <b style="color:#9cdcfe">class</b>=<b style="color:#ce9178">"post__content-wrap"</b><b style="color:#808080">&gt;</b></span>
<div style="left:326.00px;top:653.00px;width:1280.00px;height:216.00px;background:#1e1e1e;"></div>
<div style="left:326.00px;top:653.00px;width:1280.00px;height:1.00px;background:#414141;"></div>
<span class="t m" id="t130" style="left:342.90px;top:678.00px;line-height:16px;font-size:12.20px;color:#cccccc;letter-spacing:-0.221px;"> Incremental build: disabled. Enable with --incremental</span>
<span class="t m" id="t131" style="left:342.90px;top:694.00px;line-height:16px;font-size:12.20px;color:#cccccc;letter-spacing:-0.221px;">      Generating... </span>
<span class="t m" id="t132" style="left:342.90px;top:710.00px;line-height:16px;font-size:12.20px;color:#cccccc;letter-spacing:-0.221px;">                    done in 2.009 seconds.</span>
<span class="t m" id="t133" style="left:342.90px;top:726.00px;line-height:16px;font-size:12.20px;color:#cccccc;letter-spacing:-0.221px;"> Auto-regeneration: disabled. Use --watch to enable.</span>
<span class="t m" id="t134" style="left:342.90px;top:742.00px;line-height:16px;font-size:12.20px;color:#cccccc;letter-spacing:-0.221px;">Configuration file: <b style="text-decoration:underline;text-underline-offset:3.4px;text-decoration-thickness:1px;text-decoration-skip-ink:none">/home/kasm-user/Repos/j-simmons-phd.github.io/_config.yml</b></span>
<span class="t m" id="t135" style="left:342.90px;top:758.00px;line-height:16px;font-size:12.20px;color:#cccccc;letter-spacing:-0.221px;">            Source: /home/kasm-user/Repos/j-simmons-phd.github.io</span>
<span class="t m" id="t136" style="left:342.90px;top:774.00px;line-height:16px;font-size:12.20px;color:#cccccc;letter-spacing:-0.221px;">       Destination: <b style="text-decoration:underline;text-underline-offset:3.4px;text-decoration-thickness:1px;text-decoration-skip-ink:none">/home/kasm-user/Repos/j-simmons-phd.github.io/_site</b></span>
<span class="t m" id="t137" style="left:342.90px;top:790.00px;line-height:16px;font-size:12.20px;color:#cccccc;letter-spacing:-0.221px;"> Incremental build: disabled. Enable with --incremental</span>
<span class="t m" id="t138" style="left:342.90px;top:806.00px;line-height:16px;font-size:12.20px;color:#cccccc;letter-spacing:-0.221px;">      Generating... </span>
<span class="t m" id="t139" style="left:342.90px;top:822.00px;line-height:16px;font-size:12.20px;color:#cccccc;letter-spacing:-0.221px;">                    done in 2.025 seconds.</span>
<span class="t m" id="t140" style="left:342.90px;top:838.00px;line-height:16px;font-size:12.20px;color:#cccccc;letter-spacing:-0.221px;"> Auto-regeneration: disabled. Use --watch to enable.</span>
<svg width="1601" height="900" viewBox="0 0 1601 900" style="left:0;top:0"><g stroke="#404040" stroke-width="1" fill="none"><path d="M385.40,227.00 V419.00"/><path d="M413.80,259.00 V275.00"/><path d="M413.80,323.00 V387.00"/><path d="M385.40,467.00 V659.00"/><path d="M413.80,499.00 V659.00"/><path d="M442.20,563.00 V659.00"/><path d="M470.60,595.00 V611.00"/><path d="M343.50,677.00 V693.00"/><path d="M343.50,693.00 V709.00"/><path d="M379.00,693.00 V709.00"/><path d="M343.50,709.00 V725.00"/><path d="M379.00,709.00 V725.00"/><path d="M414.50,709.00 V725.00"/><path d="M450.00,709.00 V725.00"/><path d="M343.50,725.00 V741.00"/><path d="M343.50,757.00 V773.00"/><path d="M379.00,757.00 V773.00"/><path d="M414.50,757.00 V773.00"/><path d="M343.50,773.00 V789.00"/><path d="M379.00,773.00 V789.00"/><path d="M343.50,789.00 V805.00"/><path d="M343.50,805.00 V821.00"/><path d="M379.00,805.00 V821.00"/><path d="M343.50,821.00 V837.00"/><path d="M379.00,821.00 V837.00"/><path d="M414.50,821.00 V837.00"/><path d="M450.00,821.00 V837.00"/><path d="M343.50,837.00 V853.00"/></g><path d="M818.50,257.20 q1,-2.2 2,0 q1,2.2 2,0 q1,-2.2 2,0 q1,2.2 2,0 q1,-2.2 2,0 q1,2.2 2,0 q1,-2.2 2,0 q1,2.2 2,0 q1,-2.2 2,0 q1,2.2 2,0 q1,-2.2 2,0 q1,2.2 2,0 q1,-2.2 2,0 q1,2.2 2,0 q1,-2.2 2,0 q1,2.2 2,0 q1,-2.2 2,0 q1,2.2 2,0" fill="none" stroke="#f14c4c" stroke-width="1.1"/><path d="M1074.10,257.20 q1,-2.2 2,0 q1,2.2 2,0 q1,-2.2 2,0 q1,2.2 2,0" fill="none" stroke="#f14c4c" stroke-width="1.1"/><path d="M903.70,609.20 q1,-2.2 2,0 q1,2.2 2,0 q1,-2.2 2,0 q1,2.2 2,0 q1,-2.2 2,0 q1,2.2 2,0 q1,-2.2 2,0 q1,2.2 2,0 q1,-2.2 2,0 q1,2.2 2,0 q1,-2.2 2,0 q1,2.2 2,0 q1,-2.2 2,0 q1,2.2 2,0 q1,-2.2 2,0 q1,2.2 2,0 q1,-2.2 2,0 q1,2.2 2,0" fill="none" stroke="#f14c4c" stroke-width="1.1"/><path d="M1159.30,609.20 q1,-2.2 2,0 q1,2.2 2,0 q1,-2.2 2,0 q1,2.2 2,0" fill="none" stroke="#f14c4c" stroke-width="1.1"/></svg>
<div style="left:326.00px;top:654.00px;width:1280.00px;height:29.60px;background:#1e1e1e;"></div>
<div style="left:326.00px;top:683.60px;width:1280.00px;height:3.00px;background:linear-gradient(rgba(0,0,0,0.55),rgba(0,0,0,0));"></div>
<span class="t" id="t141" style="top:661.30px;line-height:16px;font-size:9.65px;color:#8f8f8f;left:344.20px;letter-spacing:-0.377px;">PROBLEMS</span>
<svg width="1601" height="900" viewBox="0 0 1601 900" style="left:0;top:0"><circle cx="411" cy="668.8" r="7.6" fill="#4d4d4d"/></svg>
<span class="t" id="t142" style="top:661.30px;line-height:16px;font-size:9.65px;color:#ffffff;left:408.20px;letter-spacing:0.531px;">6</span>
<span class="t" id="t143" style="top:661.30px;line-height:16px;font-size:9.65px;color:#e7e7e7;left:437.20px;letter-spacing:-0.312px;">OUTPUT</span>
<div style="left:437.00px;top:681.60px;width:39.00px;height:1.00px;background:#e7e7e7;"></div>
<span class="t" id="t144" style="top:661.30px;line-height:16px;font-size:9.65px;color:#8f8f8f;left:495.50px;letter-spacing:-0.228px;">DEBUG CONSOLE</span>
<span class="t" id="t145" style="top:661.30px;line-height:16px;font-size:9.65px;color:#8f8f8f;left:596.70px;letter-spacing:-0.203px;">TERMINAL</span>
<div style="left:1515.00px;top:660.00px;width:100.00px;height:18.00px;background:#3c3c3c;"></div>
<span class="t" id="t146" style="top:660.60px;line-height:16px;font-size:11.75px;color:#f0f0f0;left:1522.00px;letter-spacing:0.030px;">Jekyll Run</span>
<div style="left:7.00px;top:869.00px;width:1600.00px;height:18.40px;background:#007acc;"></div>
<span class="t" id="t147" style="top:870.60px;line-height:16px;font-size:10.48px;color:#fff;left:34.60px;letter-spacing:0.567px;">drafts*</span>
<span class="t" id="t148" style="top:870.60px;line-height:16px;font-size:10.48px;color:#fff;left:123.00px;letter-spacing:0.030px;">Jekyll Run</span>
<span class="t" id="t149" style="top:870.60px;line-height:16px;font-size:10.48px;color:#fff;left:200.40px;letter-spacing:0.578px;">6</span>
<span class="t" id="t150" style="top:870.60px;line-height:16px;font-size:10.48px;color:#fff;left:224.90px;letter-spacing:0.578px;">0</span>
<span class="t" id="t151" style="top:870.60px;line-height:16px;font-size:10.48px;color:#fff;left:1408.80px;letter-spacing:0.259px;">Ln 6, Col 4</span>
<span class="t" id="t152" style="top:870.60px;line-height:16px;font-size:10.48px;color:#fff;left:1476.70px;letter-spacing:0.182px;">Tab Size: 4</span>
<span class="t" id="t153" style="top:870.60px;line-height:16px;font-size:10.48px;color:#fff;left:1543.90px;letter-spacing:-0.075px;">UTF-8</span>
<span class="t" id="t154" style="top:870.60px;line-height:16px;font-size:10.48px;color:#fff;left:1586.80px;letter-spacing:-0.414px;">LF</span>
<svg width="1601" height="900" viewBox="0 0 1601 900" style="left:0;top:0"><g fill="none" stroke="#fff" stroke-width="1">
<circle cx="22.6" cy="873.8" r="1.55"/><circle cx="22.6" cy="882.5" r="1.55"/><circle cx="28.1" cy="875.4" r="1.55"/>
<path d="M22.6,875.4 V880.9 M28.1,877 C28.1,879.3 25,879.6 22.6,880.6"/>
<path d="M83.7,877.3 A4.6,4.6 0 0 1 92.4,876.3 M92.7,879.3 A4.6,4.6 0 0 1 84,880.3"/>
<path d="M90.4,876.2 H94 L92.9,878.9 Z M86,880.4 H82.4 L83.5,877.7 Z" fill="#fff" stroke-width="0.4"/>
<path d="M112.9,874.2 L119,878.5 L112.9,882.8 Z" stroke-linejoin="round" stroke-width="1.1"/>
<circle cx="191" cy="878.1" r="4.6"/><path d="M189,876.1 L193,880.1 M193,876.1 L189,880.1"/>
<path d="M215.5,873.6 L220.3,882 H210.7 Z" stroke-linejoin="round"/><path d="M215.5,876.6 V879.6 M215.5,880.3 V881.2" />
</g></svg>
<div style="left:70.00px;top:891.00px;width:235.00px;height:9.00px;background:#555555;clip-path:polygon(3% 0,100% 0,100% 100%,0 100%);"></div>
<div style="left:383.00px;top:891.00px;width:585.00px;height:9.00px;background:#5a5a5a;"></div>
</body></html>
